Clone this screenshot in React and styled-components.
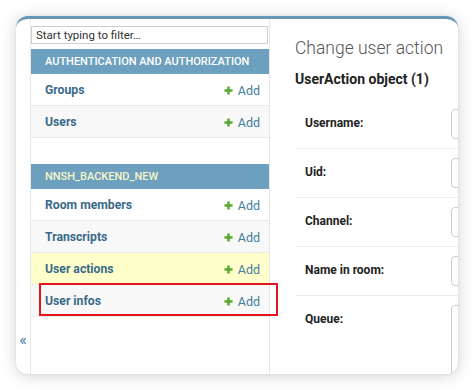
import styled, { createGlobalStyle } from 'styled-components';

const GlobalStyle = createGlobalStyle`
  html, body {
    margin: 0;
    padding: 0;
    background: #ffffff;
  }
  body {
    font-family: Roboto, "Liberation Sans", Arial, sans-serif;
  }
`;

const Page = styled.div`
  padding: 16px;
  width: 474px;
  height: 390px;
  box-sizing: border-box;
`;

const Card = styled.div`
  display: flex;
  height: 358px;
  width: 442px;
  box-sizing: border-box;
  border-top: 3px solid #6597b6;
  border-radius: 12px;
  overflow: hidden;
  background: #fff;
  box-shadow: 0 2px 16px rgba(0, 0, 0, 0.18), 0 0 3px rgba(0, 0, 0, 0.06);
`;

const Gutter = styled.div`
  width: 15px;
  flex-shrink: 0;
  border-right: 1px solid #e8e8e8;
  display: flex;
  flex-direction: column;
  justify-content: flex-end;
  align-items: center;
  padding-bottom: 26px;
  box-sizing: border-box;
`;

const Collapse = styled.span`
  color: #447e9b;
  font-size: 16px;
  line-height: 16px;
`;

const Sidebar = styled.nav`
  width: 239px;
  flex-shrink: 0;
  border-right: 1px solid #e6e6e6;
  padding-top: 7px;
  box-sizing: border-box;
`;

const Filter = styled.div`
  height: 18px;
  border: 1px solid #cfcfcf;
  box-sizing: border-box;
  font-size: 11.5px;
  line-height: 16px;
  color: #333;
  padding-left: 4px;
  margin-bottom: 5px;
  margin-right: 1px;
`;

const Module = styled.div`
  margin-bottom: ${p => p.$gap || 0}px;
`;

const Caption = styled.div`
  height: 25px;
  background: #6d9fbe;
  color: ${p => p.$tint || '#fff'};
  font-size: 11px;
  font-weight: 500;
  line-height: 26px;
  padding-left: 14px;
  text-transform: uppercase;
`;

const Row = styled.div`
  position: relative;
  height: 32px;
  box-sizing: border-box;
  display: flex;
  align-items: center;
  justify-content: space-between;
  padding: 1px 9px 0 14px;
  border-bottom: 1px solid #ebebeb;
  background: ${p => p.$bg || '#fff'};
`;

const ModelName = styled.span`
  font-size: 12.2px;
  font-weight: 700;
  color: #3a6a8a;
`;

const AddLink = styled.span`
  font-size: 12.5px;
  color: #447e9b;
  display: flex;
  align-items: center;
  gap: 5px;
`;

const Plus = styled.svg`
  width: 9px;
  height: 9px;
`;

const Highlight = styled.div`
  position: absolute;
  left: 8px;
  right: -9px;
  top: -2px;
  bottom: 0;
  border: 2px solid #e2141d;
  pointer-events: none;
`;

const Main = styled.main`
  flex: 1;
  min-width: 0;
  overflow: hidden;
  padding: 17px 0 0 25px;
`;

const Title = styled.h1`
  margin: 0;
  font-size: 17.5px;
  font-weight: 300;
  color: #555;
  line-height: 24px;
  white-space: nowrap;
`;

const Subtitle = styled.h2`
  margin: 10px 0 0;
  font-size: 14px;
  font-weight: 700;
  color: #222;
  line-height: 18px;
  white-space: nowrap;
`;

const Form = styled.div`
  margin-top: 12px;
`;

const FieldRow = styled.div`
  display: flex;
  align-items: ${p => (p.$tall ? 'flex-start' : 'center')};
  height: ${p => p.$height || 49}px;
  box-sizing: border-box;
  border-bottom: ${p => (p.$last ? 'none' : '1px solid #ececec')};
  padding: ${p => (p.$tall ? '9px' : '0')} 0 0 10px;
`;

const Label = styled.label`
  width: 146px;
  flex-shrink: 0;
  font-size: 12px;
  font-weight: 700;
  color: #222;
  line-height: 16px;
  padding-top: ${p => (p.$tall ? '6px' : '0')};
  margin-top: ${p => (p.$tall ? '0' : '-3px')};
`;

const Input = styled.div`
  width: 160px;
  height: ${p => p.$height || 30}px;
  flex-shrink: 0;
  border: 1px solid #cccccc;
  border-radius: 4px;
  box-sizing: border-box;
`;

const PlusIcon = () => (
  <Plus viewBox="0 0 10 10">
    <path d="M5 0.5v9M0.5 5h9" stroke="#5aa830" strokeWidth="2.8" />
  </Plus>
);

const ModelRow = ({ name, bg, marked }) => (
  <Row $bg={bg}>
    <ModelName>{name}</ModelName>
    <AddLink>
      <PlusIcon />
      Add
    </AddLink>
    {marked && <Highlight />}
  </Row>
);

const fields = ['Username:', 'Uid:', 'Channel:', 'Name in room:'];

export default function App() {
  return (
    <Page>
      <GlobalStyle />
      <Card>
        <Gutter>
          <Collapse>«</Collapse>
        </Gutter>
        <Sidebar>
          <Filter>Start typing to filter…</Filter>
          <Module $gap={26}>
            <Caption>Authentication and Authorization</Caption>
            <ModelRow name="Groups" />
            <ModelRow name="Users" bg="#f8f8f8" />
          </Module>
          <Module>
            <Caption $tint="#f5f7c8">NNSH_BACKEND_NEW</Caption>
            <ModelRow name="Room members" />
            <ModelRow name="Transcripts" bg="#f8f8f8" />
            <ModelRow name="User actions" bg="#ffffcc" />
            <ModelRow name="User infos" bg="#f8f8f8" marked />
          </Module>
        </Sidebar>
        <Main>
          <Title>Change user action</Title>
          <Subtitle>UserAction object (1)</Subtitle>
          <Form>
            {fields.map(f => (
              <FieldRow key={f}>
                <Label>{f}</Label>
                <Input />
              </FieldRow>
            ))}
            <FieldRow $tall $last $height={80}>
              <Label $tall>Queue:</Label>
              <Input $height={90} />
            </FieldRow>
          </Form>
        </Main>
      </Card>
    </Page>
  );
}
